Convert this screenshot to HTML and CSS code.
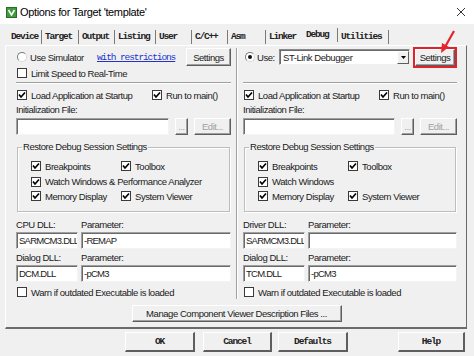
FILE: index.html
```html
<!DOCTYPE html>
<html lang="en">
<head>
  <meta charset="UTF-8">
  <title>Options for Target 'template'</title>
  <link rel="stylesheet" href="styles.css">
</head>
<body>

  <div class="titlebar">
    <svg class="app-icon" viewBox="0 0 11 11"><rect x="0.5" y="0.5" width="10" height="10" fill="#3f9b3a" stroke="#2c6a2a"/><polyline points="2.5,3 5.5,8 8.5,3" fill="none" stroke="#fff" stroke-width="1.6"/></svg>
    <span class="title">Options for Target 'template'</span>
    <svg class="close" viewBox="0 0 8 8"><path d="M0 0 L8 8 M8 0 L0 8" stroke="#333" stroke-width="1"/></svg>
  </div>

  <div class="tabs">
    <span class="tab">Device</span>
    <span class="tab">Target</span>
    <span class="tab">Output</span>
    <span class="tab">Listing</span>
    <span class="tab">User</span>
    <span class="tab">C/C++</span>
    <span class="tab">Asm</span>
    <span class="tab before-active">Linker</span>
    <span class="tab active">Debug</span>
    <span class="tab">Utilities</span>
  </div>

  <div class="page">
    <div class="cols">

      <div class="col">
        <div class="row-top">
          <span class="radio"></span>
          <span class="opt-label">Use Simulator</span>
          <a class="link">with restrictions</a>
          <button class="btn settings">Settings</button>
        </div>
        <div class="row">
          <span class="cb"></span>Limit Speed to Real-Time
        </div>
        <div class="sep"></div>
        <div class="pair">
          <div class="row"><span class="cb on"><svg viewBox="0 0 8 8"><polyline points="1,3.5 3,6 7,1.5"/></svg></span>Load Application at Startup</div>
          <div class="row"><span class="cb on"><svg viewBox="0 0 8 8"><polyline points="1,3.5 3,6 7,1.5"/></svg></span>Run to main()</div>
        </div>
        <div class="row">Initialization File:</div>
        <div class="file-row">
          <span class="field"></span>
          <button class="btn small off">...</button>
          <button class="btn edit off">Edit...</button>
        </div>
        <fieldset class="group">
          <legend>Restore Debug Session Settings</legend>
          <div class="grow pair-in">
            <div class="row"><span class="cb on"><svg viewBox="0 0 8 8"><polyline points="1,3.5 3,6 7,1.5"/></svg></span>Breakpoints</div>
            <div class="row"><span class="cb on"><svg viewBox="0 0 8 8"><polyline points="1,3.5 3,6 7,1.5"/></svg></span>Toolbox</div>
          </div>
          <div class="grow row"><span class="cb on"><svg viewBox="0 0 8 8"><polyline points="1,3.5 3,6 7,1.5"/></svg></span>Watch Windows &amp; Performance Analyzer</div>
          <div class="grow pair-in">
            <div class="row"><span class="cb on"><svg viewBox="0 0 8 8"><polyline points="1,3.5 3,6 7,1.5"/></svg></span>Memory Display</div>
            <div class="row"><span class="cb on"><svg viewBox="0 0 8 8"><polyline points="1,3.5 3,6 7,1.5"/></svg></span>System Viewer</div>
          </div>
        </fieldset>
        <div class="dll-labels"><span>CPU DLL:</span><span>Parameter:</span></div>
        <div class="dll-fields"><span class="field">SARMCM3.DLL</span><span class="field">-REMAP</span></div>
        <div class="dll-labels"><span>Dialog DLL:</span><span>Parameter:</span></div>
        <div class="dll-fields"><span class="field">DCM.DLL</span><span class="field">-pCM3</span></div>
        <div class="row warn"><span class="cb"></span>Warn if outdated Executable is loaded</div>
      </div>

      <div class="col right">
        <div class="row-top">
          <span class="radio on"></span>
          <span class="use-label">Use:</span>
          <span class="combo">ST-Link Debugger<span class="combo-arrow"><svg viewBox="0 0 5 3"><polygon points="0,0 5,0 2.5,3" fill="#000"/></svg></span></span>
          <button class="btn settings marked">Settings</button>
        </div>
        <div class="row"></div>
        <div class="sep"></div>
        <div class="pair">
          <div class="row"><span class="cb on"><svg viewBox="0 0 8 8"><polyline points="1,3.5 3,6 7,1.5"/></svg></span>Load Application at Startup</div>
          <div class="row"><span class="cb on"><svg viewBox="0 0 8 8"><polyline points="1,3.5 3,6 7,1.5"/></svg></span>Run to main()</div>
        </div>
        <div class="row">Initialization File:</div>
        <div class="file-row">
          <span class="field"></span>
          <button class="btn small off">...</button>
          <button class="btn edit off">Edit...</button>
        </div>
        <fieldset class="group">
          <legend>Restore Debug Session Settings</legend>
          <div class="grow pair-in">
            <div class="row"><span class="cb on"><svg viewBox="0 0 8 8"><polyline points="1,3.5 3,6 7,1.5"/></svg></span>Breakpoints</div>
            <div class="row"><span class="cb on"><svg viewBox="0 0 8 8"><polyline points="1,3.5 3,6 7,1.5"/></svg></span>Toolbox</div>
          </div>
          <div class="grow row"><span class="cb on"><svg viewBox="0 0 8 8"><polyline points="1,3.5 3,6 7,1.5"/></svg></span>Watch Windows</div>
          <div class="grow pair-in">
            <div class="row"><span class="cb on"><svg viewBox="0 0 8 8"><polyline points="1,3.5 3,6 7,1.5"/></svg></span>Memory Display</div>
            <div class="row"><span class="cb on"><svg viewBox="0 0 8 8"><polyline points="1,3.5 3,6 7,1.5"/></svg></span>System Viewer</div>
          </div>
        </fieldset>
        <div class="dll-labels"><span>Driver DLL:</span><span>Parameter:</span></div>
        <div class="dll-fields"><span class="field">SARMCM3.DLL</span><span class="field"></span></div>
        <div class="dll-labels"><span>Dialog DLL:</span><span>Parameter:</span></div>
        <div class="dll-fields"><span class="field">TCM.DLL</span><span class="field">-pCM3</span></div>
        <div class="row warn"><span class="cb"></span>Warn if outdated Executable is loaded</div>
      </div>

    </div>
    <div class="manage-row">
      <button class="btn manage">Manage Component Viewer Description Files ...</button>
    </div>
  </div>

  <div class="footer">
    <button class="btn foot ok">OK</button>
    <button class="btn foot cancel">Cancel</button>
    <button class="btn foot defaults">Defaults</button>
    <button class="btn foot help">Help</button>
  </div>

  <svg class="red-arrow" viewBox="0 0 24 26"><path d="M21 2 L12 18" stroke="#e3262b" stroke-width="2.2" fill="none"/><polygon points="8,24 9,14 16,18" fill="#e3262b"/></svg>

</body>
</html>
```

FILE: styles.css
```css
body {
  margin: 0;
  width: 474px;
  height: 356px;
  overflow: hidden;
  position: relative;
  background: #f0f0f0;
  color: #1a1a1a;
  font-family: "Liberation Sans", Arial, sans-serif;
  font-size: 9.5px;
  letter-spacing: -0.45px;
}
button {
  font: inherit;
  color: inherit;
  letter-spacing: inherit;
}

/* title bar */
.titlebar {
  height: 24px;
  background: #fff;
  display: flex;
  align-items: center;
  padding-left: 6px;
  letter-spacing: normal;
}
.app-icon {
  width: 11px;
  height: 11px;
  margin-right: 3px;
}
.title {
  font-size: 11px;
  letter-spacing: -0.35px;
  color: #000;
}
.close {
  width: 8px;
  height: 8px;
  margin-left: auto;
  margin-right: 9px;
}

/* tabs */
.tabs {
  display: grid;
  grid-template-columns: 34px 37px 36px 41px 36px 36px 38px 37px 35px 51px;
  margin: 5px 0 0 8px;
  height: 16px;
  align-items: center;
  font-family: "Liberation Mono", monospace;
  font-weight: bold;
  font-size: 9.5px;
  letter-spacing: -1.2px;
  color: #222;
}
.tab {
  height: 14px;
  line-height: 14px;
  padding-left: 3px;
  border-right: 1px solid #7a7a7a;
  white-space: nowrap;
}
.tab.before-active { border-right-color: transparent; }
.tab.active {
  position: relative;
  top: -2px;
}

/* tab page */
.page {
  box-sizing: border-box;
  height: 284px;
  margin: 0 7px 0 5px;
  padding: 2px 9px 0 10px;
  border: 1px solid;
  border-color: #fff #6a6a6a #6a6a6a #fff;
  border-bottom-width: 2px;
}
.cols {
  display: grid;
  grid-template-columns: 220px 1fr;
}
.col {
  padding-right: 5px;
  display: flex;
  flex-direction: column;
}
.col.right {
  padding: 0 0 0 6px;
  border-left: 1px solid #a0a0a0;
  box-shadow: inset 1px 0 #fff;
}

.row {
  display: flex;
  align-items: center;
  height: 14px;
  white-space: nowrap;
}
.row-top {
  display: flex;
  align-items: center;
  height: 18px;
  white-space: nowrap;
}
.pair {
  display: grid;
  grid-template-columns: 135px auto;
}
.sep {
  border-top: 1px solid #a0a0a0;
  border-bottom: 1px solid #fff;
  margin: 2px 0 4px;
}

/* controls */
.cb {
  box-sizing: border-box;
  width: 10px;
  height: 10px;
  margin: 0 4px 0 1px;
  border: 1px solid #3a3a3a;
  background: #fff;
  display: inline-flex;
}
.cb svg {
  width: 8px;
  height: 8px;
  fill: none;
  stroke: #000;
  stroke-width: 1.7;
}
.radio {
  box-sizing: border-box;
  width: 10px;
  height: 10px;
  margin: 0 3px 0 1px;
  border-radius: 50%;
  border: 1px solid #7a7a7a;
  border-right-color: #d8d8d8;
  border-bottom-color: #d8d8d8;
  background: #fff;
  display: inline-flex;
  align-items: center;
  justify-content: center;
}
.radio.on { margin-left: 2px; margin-right: 2px; }
.radio.on::after {
  content: "";
  width: 4px;
  height: 4px;
  border-radius: 50%;
  background: #111;
}
.opt-label { width: 67px; }
.use-label { width: 22px; }
.link {
  font-family: "Liberation Mono", monospace;
  font-size: 9.5px;
  letter-spacing: -1.1px;
  color: #2233cc;
  text-decoration: underline;
}

.btn {
  box-sizing: border-box;
  padding: 0;
  background: #f0f0f0;
  border: 1px solid;
  border-color: #fff #5e5e5e #5e5e5e #fff;
  box-shadow: inset -1px -1px #a0a0a0;
  white-space: nowrap;
}
.btn.off { color: #a0a0a0; }
.settings {
  width: 45px;
  height: 18px;
  margin-left: auto;
}
.settings.marked {
  width: 40px;
  height: 17px;
  margin-right: 2px;
  outline: 2px solid #e0232a;
}
.combo {
  box-sizing: border-box;
  width: 131px;
  height: 16px;
  display: flex;
  align-items: center;
  padding-left: 3px;
  background: #fff;
  border: 1px solid;
  border-color: #8a8a8a #f0f0f0 #f0f0f0 #8a8a8a;
  box-shadow: inset 1px 1px #6a6a6a;
}
.combo-arrow {
  box-sizing: border-box;
  margin-left: auto;
  width: 12px;
  height: 13px;
  background: #f0f0f0;
  border: 1px solid;
  border-color: #fff #5e5e5e #5e5e5e #fff;
  display: flex;
  align-items: center;
  justify-content: center;
}
.combo-arrow svg {
  width: 5px;
  height: 3px;
}

.field {
  box-sizing: border-box;
  height: 17px;
  display: flex;
  align-items: center;
  padding-left: 2px;
  background: #fff;
  border: 1px solid;
  border-color: #a0a0a0 #f4f4f4 #f4f4f4 #a0a0a0;
  box-shadow: inset 1px 1px #6a6a6a;
  white-space: nowrap;
  overflow: hidden;
}
.file-row {
  display: flex;
  gap: 6px;
  margin-top: 2px;
}
.file-row .field { flex: 1; }
.file-row .small { width: 13px; height: 17px; }
.file-row .edit { width: 37px; height: 17px; }

/* group box */
.group {
  margin: 6px 1px 0;
  padding: 6px 0 7px 12px;
  border: 1px solid #bdbdbd;
  box-shadow: inset 1px 1px #fff, 1px 1px #fff;
}
.group legend {
  margin-left: -8px;
  padding: 0 1px;
  line-height: 12px;
}
.grow { height: 15px; }
.pair-in {
  display: grid;
  grid-template-columns: 90px auto;
}

/* dll fields */
.dll-labels {
  display: grid;
  grid-template-columns: 65px 1fr;
  height: 14px;
  align-items: center;
  margin-top: 1px;
}
.group + .dll-labels { margin-top: 5px; }
.dll-fields {
  display: grid;
  grid-template-columns: 62px 1fr;
  column-gap: 3px;
  margin-top: 1px;
}
.dll-fields .field {
  padding-left: 2px;
  letter-spacing: -0.75px;
}
.warn { margin-top: 3px; }

.manage-row {
  display: flex;
  justify-content: center;
  margin-top: 6px;
}
.manage {
  width: 210px;
  height: 17px;
}

/* bottom buttons */
.footer {
  display: flex;
  padding: 3px 0 0 125px;
}
.foot {
  height: 20px;
  font-family: "Liberation Mono", monospace;
  font-weight: bold;
  font-size: 9.5px;
  letter-spacing: -1.1px;
  color: #222;
  border-right-width: 2px;
  border-bottom-width: 2px;
  box-shadow: none;
}
.ok { width: 70px; }
.cancel { width: 69px; margin-left: 8px; }
.defaults { width: 70px; margin-left: 6px; }
.help { width: 67px; margin-left: 50px; }

.red-arrow {
  position: absolute;
  left: 433px;
  top: 29px;
  width: 24px;
  height: 26px;
}
```
